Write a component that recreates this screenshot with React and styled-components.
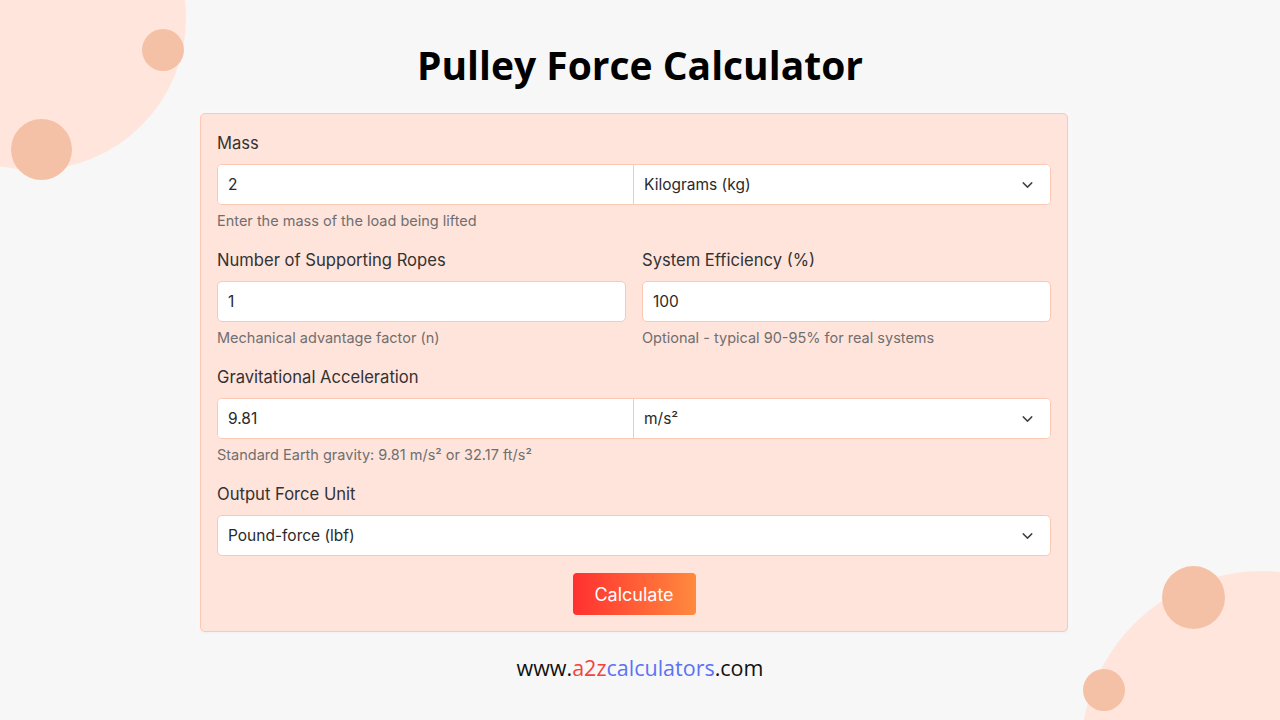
import styled, { createGlobalStyle } from 'styled-components';
import { ChevronDown } from 'lucide-react';

const GlobalStyle = createGlobalStyle`
  * { box-sizing: border-box; }
  body {
    margin: 0;
    background: #f7f7f7;
    font-family: Inter, "Noto Sans", sans-serif;
  }
`;

const Page = styled.div`
  position: relative;
  width: 1280px;
  height: 720px;
  overflow: hidden;
  background: #f7f7f7;
  display: flex;
  flex-direction: column;
  align-items: center;
`;

const Blob = styled.div`
  position: absolute;
  left: ${(p) => p.x - p.size / 2}px;
  top: ${(p) => p.y - p.size / 2}px;
  width: ${(p) => p.size}px;
  height: ${(p) => p.size}px;
  border-radius: 50%;
  background: ${(p) => (p.dark ? '#f5c1a6' : '#ffe5dc')};
`;

const Title = styled.h1`
  position: relative;
  margin: 41px 0 24px;
  font-family: "Open Sans", Lato, sans-serif;
  font-weight: 700;
  font-size: 39px;
  line-height: 48px;
  color: #000;
`;

const Card = styled.div`
  position: relative;
  width: 868px;
  margin-right: 12px;
  padding: 16px 16px 16px;
  background: #ffe4dc;
  border: 1px solid #fcc8b3;
  border-radius: 5px;
  box-shadow: 0 0 6px rgba(255, 255, 255, 0.9), 0 1px 3px rgba(0, 0, 0, 0.08);
`;

const Row = styled.div`
  display: grid;
  grid-template-columns: 1fr 1fr;
  gap: 16px;
`;

const Field = styled.div`
  margin-bottom: ${(p) => (p.last ? '0' : '16px')};
`;

const Label = styled.label`
  display: block;
  font-size: 16.6px;
  line-height: 26px;
  color: #333;
  margin-bottom: 8px;
`;

const Help = styled.div`
  margin-top: 6px;
  font-size: 14.5px;
  line-height: 20px;
  color: #6f6f6f;
`;

const Group = styled.div`
  display: grid;
  grid-template-columns: 1fr 1fr;
  height: 41px;
  background: #fff;
  border: 1px solid #fcc8b3;
  border-radius: 5px;
  overflow: hidden;
`;

const Input = styled.input`
  display: block;
  width: 100%;
  min-width: 0;
  height: ${(p) => (p.bare ? '100%' : '41px')};
  padding: 0 10px;
  font-family: Inter, sans-serif;
  font-size: 15.5px;
  color: #2a2a2a;
  background: #fff;
  border: ${(p) => (p.bare ? 'none' : '1px solid #fcc8b3')};
  border-right: 1px solid #fcc8b3;
  border-radius: ${(p) => (p.bare ? '0' : '5px')};
  outline: none;
`;

const SelectWrap = styled.div`
  position: relative;
  min-width: 0;
  height: ${(p) => (p.full ? '41px' : '100%')};
  background: #fff;
  border: ${(p) => (p.full ? '1px solid #fcc8b3' : 'none')};
  border-radius: ${(p) => (p.full ? '5px' : '0')};
  overflow: hidden;

  svg {
    position: absolute;
    right: 14px;
    top: 50%;
    transform: translateY(-50%);
    color: #444;
    pointer-events: none;
  }
`;

const Select = styled.select`
  appearance: none;
  width: 100%;
  height: 100%;
  padding: 0 10px;
  font-family: Inter, sans-serif;
  font-size: 15.5px;
  color: #2a2a2a;
  background: transparent;
  border: none;
  outline: none;
`;

const Actions = styled.div`
  display: flex;
  justify-content: center;
  margin-top: 17px;
`;

const Button = styled.button`
  width: 123px;
  height: 42px;
  border: none;
  border-radius: 4px;
  background: linear-gradient(90deg, #ff3030, #ff8a3d);
  color: #fff;
  font-family: Inter, sans-serif;
  font-size: 18px;
  cursor: pointer;
`;

const Footer = styled.div`
  position: relative;
  margin-top: 22px;
  font-family: "Open Sans", Lato, sans-serif;
  font-size: 21.5px;
  line-height: 28px;
  color: #111;

  .red { color: #f5433a; }
  .blue { color: #5a72f5; }
`;

const SelectBox = ({ value, options, full }) => (
  <SelectWrap full={full}>
    <Select defaultValue={value}>
      {options.map((o) => (
        <option key={o}>{o}</option>
      ))}
    </Select>
    <ChevronDown size={17} strokeWidth={2} />
  </SelectWrap>
);

export default function App() {
  return (
    <Page>
      <GlobalStyle />
      <Blob x={34} y={18} size={304} />
      <Blob x={163} y={50} size={42} dark />
      <Blob x={41} y={149} size={61} dark />
      <Blob x={1262} y={752} size={362} />
      <Blob x={1193} y={597} size={63} dark />
      <Blob x={1104} y={690} size={42} dark />

      <Title>Pulley Force Calculator</Title>

      <Card>
        <Field>
          <Label>Mass</Label>
          <Group>
            <Input bare defaultValue="2" />
            <SelectBox value="Kilograms (kg)" options={['Kilograms (kg)', 'Grams (g)', 'Pounds (lb)']} />
          </Group>
          <Help>Enter the mass of the load being lifted</Help>
        </Field>

        <Row>
          <Field>
            <Label>Number of Supporting Ropes</Label>
            <Input defaultValue="1" />
            <Help>Mechanical advantage factor (n)</Help>
          </Field>
          <Field>
            <Label>System Efficiency (%)</Label>
            <Input defaultValue="100" />
            <Help>Optional - typical 90-95% for real systems</Help>
          </Field>
        </Row>

        <Field>
          <Label>Gravitational Acceleration</Label>
          <Group>
            <Input bare defaultValue="9.81" />
            <SelectBox value="m/s²" options={['m/s²', 'ft/s²']} />
          </Group>
          <Help>Standard Earth gravity: 9.81 m/s² or 32.17 ft/s²</Help>
        </Field>

        <Field last>
          <Label>Output Force Unit</Label>
          <SelectBox full value="Pound-force (lbf)" options={['Newtons (N)', 'Pound-force (lbf)', 'Kilonewtons (kN)']} />
        </Field>

        <Actions>
          <Button>Calculate</Button>
        </Actions>
      </Card>

      <Footer>
        www.<span className="red">a2z</span><span className="blue">calculators</span>.com
      </Footer>
    </Page>
  );
}
